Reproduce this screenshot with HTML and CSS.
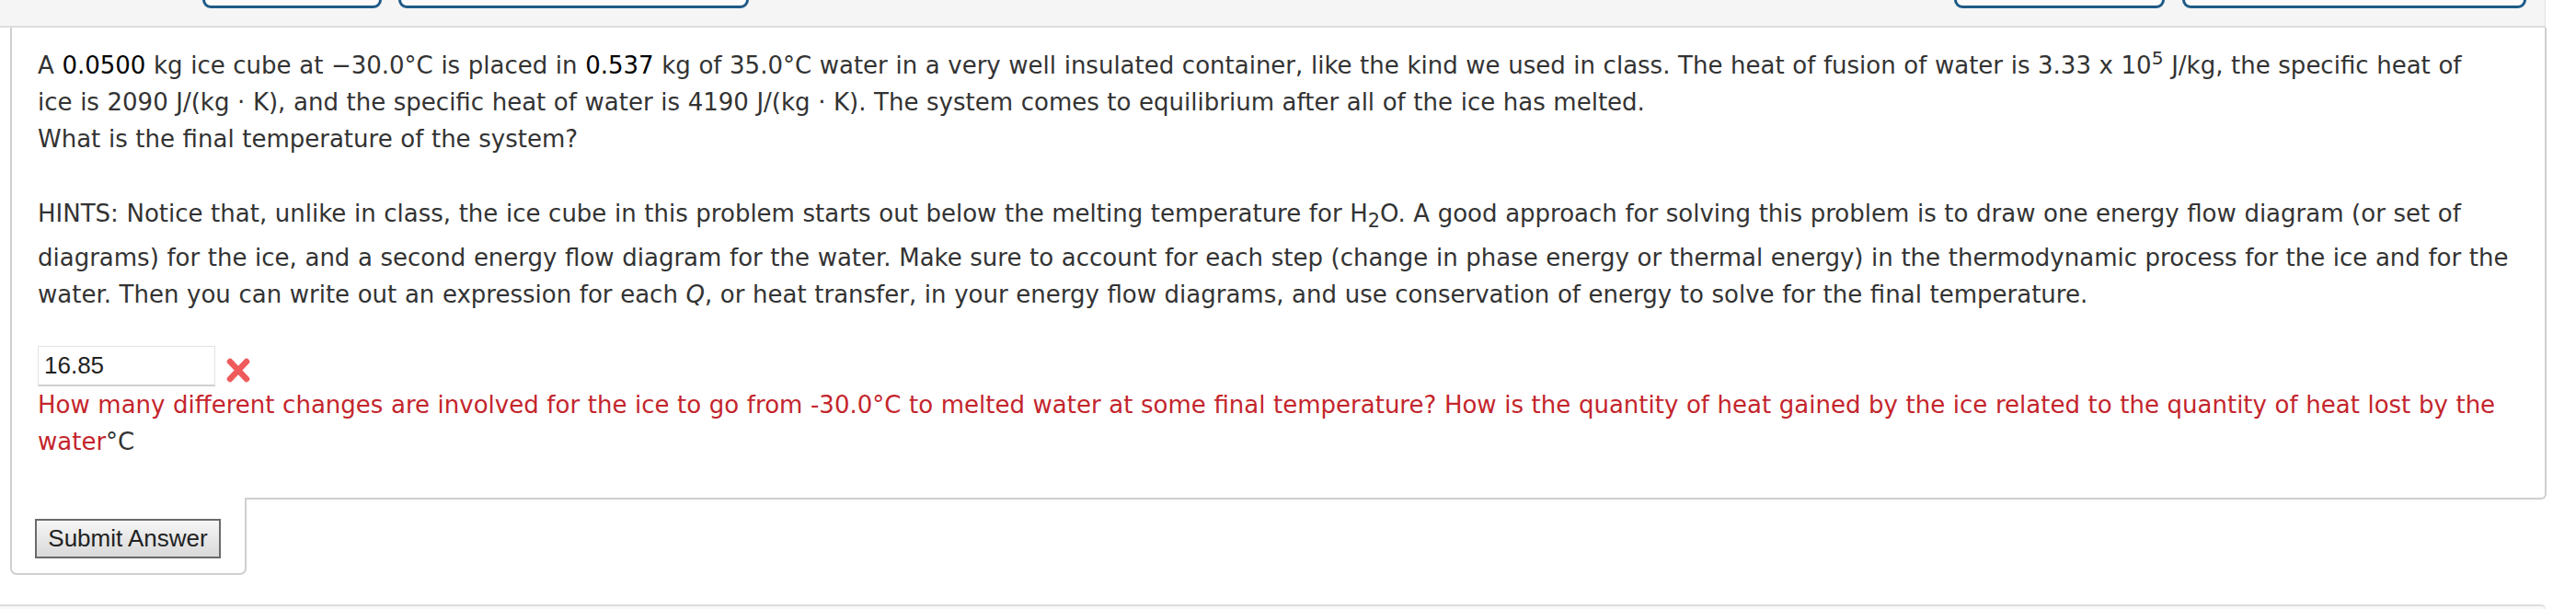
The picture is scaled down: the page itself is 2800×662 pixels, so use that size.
FILE: index.html
```html
<!DOCTYPE html>
<html>
<head>
<meta charset="utf-8">
<link rel="stylesheet" href="styles.css">
</head>
<body>
<div class="page">
  <div class="topbar">
    <div class="btn-group">
      <span class="navbtn w1"></span>
      <span class="navbtn w2"></span>
    </div>
    <div class="btn-group g2">
      <span class="navbtn w3"></span>
      <span class="navbtn w4"></span>
    </div>
  </div>
  <div class="card">
    <p class="para intro">A <span class="num">0.0500</span> kg ice cube at −30.0°C is placed in <span class="num">0.537</span> kg of 35.0°C water in a very well insulated container, like the kind we used in class. The heat of fusion of water is 3.33 x 10<sup>5</sup> J/kg, the specific heat of ice is 2090 J/(kg · K), and the specific heat of water is 4190 J/(kg · K). The system comes to equilibrium after all of the ice has melted.<br>What is the final temperature of the system?</p>
    <p class="para hints">HINTS: Notice that, unlike in class, the ice cube in this problem starts out below the melting temperature for H<sub>2</sub>O. A good approach for solving this problem is to draw one energy flow diagram (or set of diagrams) for the ice, and a second energy flow diagram for the water. Make sure to account for each step (change in phase energy or thermal energy) in the thermodynamic process for the ice and for the water. Then you can write out an expression for each <i>Q</i>, or heat transfer, in your energy flow diagrams, and use conservation of energy to solve for the final temperature.</p>
    <div class="answer">
      <input class="field" type="text" value="16.85">
      <svg class="wrong" width="28" height="27" viewBox="0 0 28 27">
        <path d="M5 4 L23 23 M23 4 L5 23" stroke="#ef5b5b" stroke-width="6.5" stroke-linecap="round" fill="none"/>
      </svg>
    </div>
    <p class="feedback">How many different changes are involved for the ice to go from -30.0°C to melted water at some final temperature? How is the quantity of heat gained by the ice related to the quantity of heat lost by the water<span class="unit">°C</span></p>
  </div>
  <div class="tab">
    <button class="submit">Submit Answer</button>
  </div>
  <div class="nextbar"></div>
</div>
</body>
</html>
```

FILE: styles.css
```css
html, body {
  margin: 0;
  padding: 0;
  background: #ffffff;
}

.page {
  width: 2800px;
  font-family: "DejaVu Sans", Verdana, sans-serif;
  color: #333333;
}

.topbar {
  box-sizing: border-box;
  width: 2767px;
  height: 30px;
  background: #f5f5f5;
  border-bottom: 2px solid #dddddd;
  border-right: 1px solid #e2e2e2;
  display: flex;
  justify-content: space-between;
  padding: 0 20px 0 220px;
  overflow: hidden;
}

.btn-group {
  display: flex;
  gap: 18px;
}

.btn-group.g2 {
  gap: 19px;
}

.navbtn {
  box-sizing: border-box;
  display: block;
  height: 40px;
  margin-top: -31px;
  border: 3px solid #1f5b87;
  border-radius: 9px;
  background: #fbfbfb;
}

.w1 { width: 195px; }
.w2 { width: 381px; }
.w3 { width: 229px; }
.w4 { width: 374px; }

.card {
  box-sizing: border-box;
  margin-left: 11px;
  width: 2757px;
  border: 2px solid #cfcfcf;
  border-top: none;
  border-bottom-right-radius: 6px;
  padding: 21px 28px 41px 28px;
  font-size: 26px;
  line-height: 40px;
  word-spacing: 0.35px;
}

.para {
  margin: 0;
}

.intro {
  max-width: 2660px;
}

.hints {
  margin-top: 41px;
}

.num {
  color: #000000;
}

sup {
  font-size: 0.78em;
  line-height: 1;
}

sub {
  font-size: 0.8em;
}

.answer {
  display: flex;
  align-items: center;
  gap: 11px;
  margin-top: 36px;
}

.field {
  box-sizing: border-box;
  width: 193px;
  height: 44px;
  margin: 0;
  padding: 0 6px;
  border: 1px solid #e2e2e2;
  border-bottom: 2px solid #cfcfcf;
  font-family: "Liberation Sans", Arial, sans-serif;
  font-size: 26px;
  color: #222222;
  background: #ffffff;
  outline: none;
}

.wrong {
  display: block;
  margin-top: 8px;
}

.feedback {
  margin: 0;
  color: #c4252c;
}

.unit {
  color: #333333;
}

.tab {
  box-sizing: border-box;
  margin-left: 11px;
  margin-top: -2px;
  width: 257px;
  background: #ffffff;
  border: 2px solid #cfcfcf;
  border-top: none;
  border-bottom-left-radius: 7px;
  border-bottom-right-radius: 7px;
  padding: 23px 0 16px 25px;
}

.submit {
  display: block;
  box-sizing: border-box;
  width: 202px;
  height: 43px;
  margin: 0;
  padding: 0;
  border: 2px solid #6a6a6a;
  background: linear-gradient(#f6f6f6, #d9d9d9);
  font-family: "Liberation Sans", Arial, sans-serif;
  font-size: 26px;
  color: #222222;
  text-align: center;
}

.nextbar {
  box-sizing: border-box;
  margin-top: 32px;
  width: 2767px;
  height: 20px;
  background: #f8f8f8;
  border-top: 2px solid #dddddd;
  border-right: 1px solid #e2e2e2;
  border-top-right-radius: 5px;
}
```
